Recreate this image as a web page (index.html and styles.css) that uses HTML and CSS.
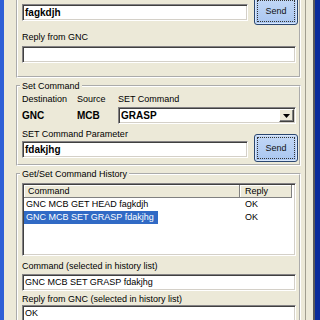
FILE: index.html
```html
<!DOCTYPE html>
<html lang="en">
  <head>
    <meta charset="UTF-8" />
    <title>GNC command console</title>
    <link rel="stylesheet" href="styles.css">
  </head>
  <body>
    <div class="frame-left"></div>
    <div class="content">
      <div class="group group-get">
        <div class="send-grid">
          <div class="label">GET Command Parameter</div>
          <div class="field value">fagkdjh</div>
          <button class="send">Send</button>
        </div>
        <div class="label reply-label">Reply from GNC</div>
        <div class="field"></div>
      </div>

      <fieldset class="group">
        <legend>Set Command</legend>
        <div class="cmd-grid">
          <div class="label">Destination</div>
          <div class="label">Source</div>
          <div class="label">SET Command</div>
          <div class="value">GNC</div>
          <div class="value">MCB</div>
          <div class="field combo">
            <span class="value combo-text">GRASP</span>
            <span class="drop">
              <svg width="7" height="4" viewBox="0 0 7 4"><polygon points="0,0 7,0 3.5,4" fill="#000"/></svg>
            </span>
          </div>
        </div>
        <div class="send-grid param">
          <div class="label">SET Command Parameter</div>
          <div class="field value">fdakjhg</div>
          <button class="send">Send</button>
        </div>
      </fieldset>

      <fieldset class="group">
        <legend>Get/Set Command History</legend>
        <div class="listview">
          <div class="lv-head">
            <div class="lv-col">Command</div>
            <div class="lv-col lv-col-reply">Reply</div>
          </div>
          <div class="lv-row">
            <div><span class="lv-text">GNC MCB GET HEAD fagkdjh</span></div>
            <div class="lv-reply">OK</div>
          </div>
          <div class="lv-row">
            <div><span class="lv-text selected">GNC MCB SET GRASP fdakjhg</span></div>
            <div class="lv-reply">OK</div>
          </div>
        </div>
        <div class="label hist-label">Command (selected in history list)</div>
        <div class="field plain">GNC MCB SET GRASP fdakjhg</div>
        <div class="label hist-label2">Reply from GNC (selected in history list)</div>
        <div class="field plain">OK</div>
      </fieldset>
    </div>
    <div class="rail"></div>
    <div class="frame-right"></div>
  </body>
</html>
```

FILE: styles.css
```css
body {
  margin: 0;
  height: 320px;
  overflow: hidden;
  display: flex;
  background: #ece9d8;
  font-family: "Liberation Sans", Arial, sans-serif;
  font-size: 9px;
  color: #000;
}
.frame-left {
  width: 4px;
  flex: none;
  background: #2f5fd6;
}
.content {
  width: 285px;
  flex: none;
  padding-left: 12px;
}
.rail {
  width: 7px;
  flex: none;
  margin-left: 4px;
  border-left: 1px solid #a19e8f;
}
.frame-right {
  width: 5px;
  flex: none;
  border-left: 2px solid #5a5a5a;
  background: #0a2c9b;
}

.group {
  box-sizing: border-box;
  width: 285px;
  margin: 2px 0 0;
  padding: 1px 3px 6px 4px;
  border: 2px groove #fff;
  min-width: 0;
}
.group-get {
  margin-top: -11px;
  padding-top: 0;
  padding-bottom: 13px;
}
legend {
  padding: 0 2px;
  margin-left: -2px;
  line-height: 12px;
}
.group:last-child {
  padding-top: 3px;
}

.label {
  line-height: 12px;
  white-space: nowrap;
}
.reply-label {
  margin-top: 10px;
  margin-bottom: 3px;
}
.hist-label {
  margin-top: 4px;
  margin-bottom: 2px;
}
.hist-label2 {
  margin-top: 2px;
}

.field {
  box-sizing: border-box;
  height: 17px;
  padding: 0 2px;
  background: #fff;
  border: 1px solid;
  border-color: #848284 #fff #fff #848284;
  box-shadow: inset 1px 1px 0 #404040, inset -1px -1px 0 #d4d0c8;
  line-height: 15px;
  white-space: nowrap;
  overflow: hidden;
}
.value {
  font-weight: bold;
  font-size: 10px;
}

.send-grid {
  display: grid;
  grid-template-columns: 226px 44px;
  column-gap: 6px;
}
.send-grid .label {
  grid-column: 1;
}
.send-grid .field {
  grid-column: 1;
  margin-top: 1px;
}
.send {
  grid-column: 2;
  grid-row: 1 / span 2;
  align-self: end;
  margin-bottom: -4px;
  height: 28px;
  padding: 0;
  font-family: inherit;
  font-size: 9px;
  color: #111;
  background: linear-gradient(#c3d8f6, #a9c6f0);
  border: 1px solid #2b4770;
  border-radius: 3px;
  box-shadow: inset 0 0 0 1px #d7e5fa;
  outline: 1px dotted #333;
  outline-offset: -4px;
}
.param {
  margin-top: 4px;
}

.cmd-grid {
  display: grid;
  grid-template-columns: 55px 41px 1fr;
  grid-template-rows: 12px 17px;
  row-gap: 2px;
  align-items: center;
}
.combo {
  display: flex;
  padding: 1px;
  line-height: 13px;
}
.combo-text {
  flex: 1;
  padding-left: 1px;
}
.drop {
  box-sizing: border-box;
  width: 15px;
  height: 13px;
  display: flex;
  align-items: center;
  justify-content: center;
  background: #ece9d8;
  border: 1px solid;
  border-color: #fff #404040 #404040 #fff;
  box-shadow: inset -1px -1px 0 #808080;
}

.listview {
  box-sizing: border-box;
  height: 73px;
  padding: 1px;
  background: #fff;
  border: 1px solid;
  border-color: #848284 #fff #fff #848284;
  box-shadow: inset 1px 1px 0 #404040, inset -1px -1px 0 #d4d0c8;
}
.lv-head {
  display: grid;
  grid-template-columns: 216px 52px;
  height: 13px;
}
.lv-col {
  background: #ece9d8;
  border-right: 1px solid #808080;
  border-bottom: 1px solid #808080;
  box-shadow: inset 1px 1px 0 #fff;
  padding-left: 4px;
  line-height: 12px;
}
.lv-col-reply {
  padding-left: 5px;
}
.lv-row {
  display: grid;
  grid-template-columns: 216px 52px;
  line-height: 13px;
  white-space: nowrap;
}
.lv-text {
  display: inline-block;
  padding: 0 4px 0 2px;
}
.selected {
  background: #316ac5;
  color: #fff;
}
.lv-reply {
  padding-left: 5px;
}
```
